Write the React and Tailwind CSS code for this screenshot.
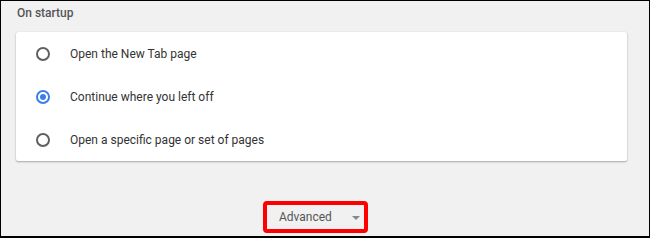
import React, { useState } from 'react';

const options = [
    { id: 'ntp', label: 'Open the New Tab page' },
    { id: 'continue', label: 'Continue where you left off' },
    { id: 'specific', label: 'Open a specific page or set of pages' },
];

const Radio = ({ checked }) => (
    <span
        className={`flex h-[14px] w-[14px] shrink-0 items-center justify-center rounded-full border-2 ${checked ? 'border-[#3c7ee8]' : 'border-[#5f5f5f]'}`}
    >
        {checked && <span className="h-[6px] w-[6px] rounded-full bg-[#3c7ee8]" />}
    </span>
);

const App = () => {
    const [selected, setSelected] = useState('continue');

    return (
        <div
            className="h-[238px] w-[650px] overflow-hidden border-t border-l border-r border-b-2 border-black bg-[#f1f1f1] text-[12px]"
            style={{ fontFamily: 'Roboto, "Liberation Sans", sans-serif' }}
        >
            <div className="pl-[15px] pr-[22px]">
                <div className="h-[31px] pt-[3px] pl-[1px] font-medium text-[#555]">On startup</div>

                <div className="rounded-[2px] bg-white shadow-[0_1px_2px_rgba(0,0,0,0.3),0_0_1px_rgba(0,0,0,0.15)]">
                    {options.map(opt => (
                        <div
                            key={opt.id}
                            onClick={() => setSelected(opt.id)}
                            className="flex h-[43px] cursor-pointer items-center gap-[20px] pl-[20px] text-[#333]"
                        >
                            <Radio checked={selected === opt.id} />
                            <span>{opt.label}</span>
                        </div>
                    ))}
                </div>

                <div className="mt-[40px] ml-[247px] flex h-[32px] w-[105px] items-center rounded-[4px] border-4 border-[#ff0000] pl-[12px] text-[#555]">
                    <span>Advanced</span>
                    <svg className="ml-[20px] mt-[2px]" width="8" height="4" viewBox="0 0 8 4">
                        <path d="M0 0 L8 0 L4 4 Z" fill="#888" />
                    </svg>
                </div>
            </div>
        </div>
    );
};

export default App;
